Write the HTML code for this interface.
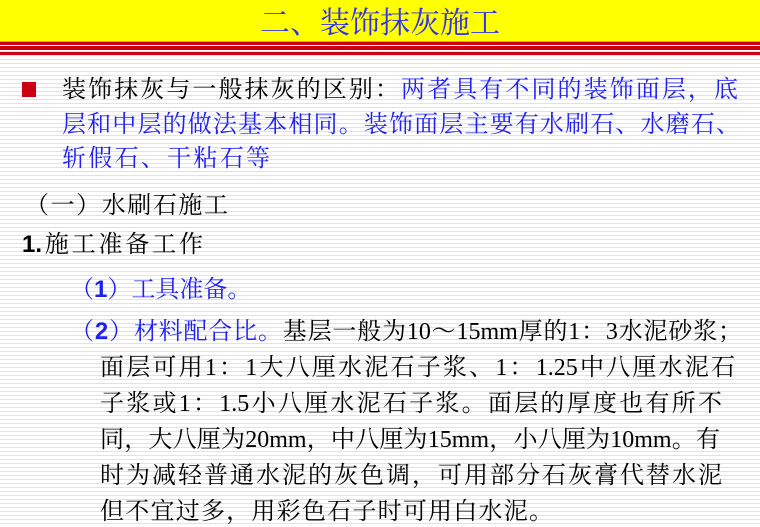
<!DOCTYPE html>
<html><head><meta charset="utf-8"><style>
body{margin:0;width:760px;height:526px;overflow:hidden;position:relative;
background:repeating-linear-gradient(to bottom,#fff 0,#fff 3px,#e2e2e2 3px,#e2e2e2 4px);
font-family:"Liberation Serif","Noto Serif CJK SC",serif;font-size:24px;color:#000}
.hdr{position:absolute;left:0;top:0;width:760px;height:41px;background:#ffff00}
.t{position:absolute;left:0;width:760px;top:2px;text-align:center;font-size:30px;color:#3030f0;line-height:36px;font-family:"Noto Serif CJK SC",serif}
.r{position:absolute;left:0;width:760px;background:#cc0010}
.l{position:absolute;white-space:nowrap;line-height:30px;height:30px;text-align:justify;text-align-last:justify;overflow:visible}
.b{color:#2020f0}
.k{font-family:"Liberation Sans","Noto Sans CJK SC",sans-serif;font-weight:bold}
</style></head><body>
<div class="hdr"><div class="t">二、装饰抹灰施工</div></div>
<div class="r" style="top:41px;height:1px;background:#e88"></div>
<div class="r" style="top:42px;height:3px"></div>
<div class="r" style="top:46px;height:4px"></div>
<div class="r" style="top:52px;height:3px"></div>
<div style="position:absolute;left:22px;top:82px;width:14px;height:15px;background:#cc0010"></div>
<div class="l" style="left:62px;top:75px;width:676px">装饰抹灰与一般抹灰的区别：<span class="b">两者具有不同的装饰面层，底</span></div>
<div class="l b" style="left:62px;top:110px;width:678px">层和中层的做法基本相同。装饰面层主要有水刷石、水磨石、</div>
<div class="l b" style="left:62px;top:144px;width:208px">斩假石、干粘石等</div>
<div class="l" style="left:25px;top:191px;width:203px">（一）水刷石施工</div>
<div class="l" style="left:22px;top:230px;width:181px"><span class="k">1.</span>施工准备工作</div>
<div class="l b" style="left:70px;top:275px;width:178px">（<span class="k">1</span>）工具准备。</div>
<div class="l" style="left:70px;top:317px;width:672px"><span class="b">（<span class="k">2</span>）材料配合比。</span>基层一般为10～15mm厚的1：3水泥砂浆；</div>
<div class="l" style="left:100px;top:353px;width:635px">面层可用1：1大八厘水泥石子浆、1：1.25中八厘水泥石</div>
<div class="l" style="left:100px;top:389px;width:622px">子浆或1：1.5小八厘水泥石子浆。面层的厚度也有所不</div>
<div class="l" style="left:100px;top:425px;width:620px">同，大八厘为20mm，中八厘为15mm，小八厘为10mm。有</div>
<div class="l" style="left:100px;top:461px;width:622px">时为减轻普通水泥的灰色调，可用部分石灰膏代替水泥</div>
<div class="l" style="left:100px;top:497px;width:453px">但不宜过多，用彩色石子时可用白水泥。</div>
</body></html>
